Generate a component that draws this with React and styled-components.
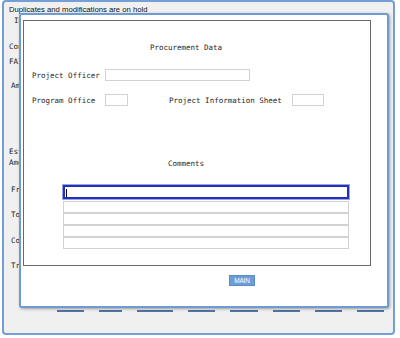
import React from "react";
import styled, { createGlobalStyle } from "styled-components";

const Global = createGlobalStyle`
  html, body { margin: 0; padding: 0; background: #ffffff; }
  * { box-sizing: border-box; }
`;

const Page = styled.div`
  width: 400px;
  height: 338px;
  padding: 0 5px 0 2px;
`;

const Window = styled.div`
  position: relative;
  width: 393px;
  height: 335px;
  border: 2px solid #739fd6;
  border-radius: 4px;
  background: #f0f0f0;
  display: flex;
  flex-direction: column;
  padding: 3px 0 21px 5px;
  overflow: hidden;
`;

const Notice = styled.div`
  font-family: "Liberation Sans", Arial, sans-serif;
  font-size: 7.7px;
  line-height: 10px;
  color: #111;
`;

const FieldLabel = styled.div`
  font-family: "DejaVu Sans Mono", monospace;
  font-size: 7.5px;
  line-height: 10px;
  color: #222;
  margin-top: ${(p) => p.$top}px;
  padding-left: ${(p) => p.$indent || 0}px;
  white-space: nowrap;
`;

const TabRow = styled.div`
  margin-top: auto;
  display: flex;
  gap: 15px;
  padding-left: 48px;
`;

const Tab = styled.div`
  width: ${(p) => p.$w}px;
  height: 2px;
  background: #4f75a6;
`;

const Modal = styled.div`
  position: absolute;
  left: 15px;
  top: 11px;
  width: 370px;
  height: 295px;
  background: #ffffff;
  border: 2px solid #6d9bd6;
  border-radius: 3px;
  box-shadow: 1px 1px 3px rgba(0, 0, 0, 0.35);
  padding: 5px 0 0 2px;
  display: flex;
  flex-direction: column;
`;

const Panel = styled.div`
  width: 348px;
  height: 246px;
  border: 1px solid #6a6a6a;
  display: flex;
  flex-direction: column;
  padding: 0 30px 0 8px;
  font-family: "DejaVu Sans Mono", monospace;
  font-size: 7.5px;
  color: #1e1e1e;
`;

const Heading = styled.div`
  text-align: center;
  line-height: 10px;
  margin-top: ${(p) => p.$top}px;
`;

const Row = styled.div`
  display: flex;
  align-items: center;
  height: 12px;
  margin-top: ${(p) => p.$top}px;
`;

const Label = styled.span`
  width: ${(p) => (p.$w ? `${p.$w}px` : "auto")};
  flex: none;
  white-space: nowrap;
  margin-left: ${(p) => p.$ml || 0}px;
`;

const TextBox = styled.div`
  width: ${(p) => p.$w}px;
  height: 12px;
  border: 1px solid #d2d2d2;
  background: #fff;
  flex: none;
  margin-left: ${(p) => p.$ml || 0}px;
`;

const CommentList = styled.div`
  display: flex;
  flex-direction: column;
  margin-top: 16px;
  padding-left: 31px;
`;

const CommentBox = styled.div`
  width: 286px;
  flex: none;
  height: ${(p) => (p.$focused ? 14 : 12)}px;
  border: ${(p) => (p.$focused ? "2px solid #2430b8" : "1px solid #d2d2d2")};
  outline: ${(p) => (p.$focused ? "1px solid #9aa6e4" : "none")};
  margin-top: ${(p) => (p.$first ? 2 : 0)}px;
  position: relative;
`;

const Caret = styled.span`
  position: absolute;
  left: 1px;
  top: 2px;
  width: 1px;
  height: 8px;
  background: #000;
`;

const Footer = styled.div`
  display: flex;
  padding-left: 206px;
  margin-top: 9px;
`;

const MainButton = styled.button`
  width: 26px;
  height: 11px;
  padding: 0;
  border: 1px solid #5a8ccc;
  background: #6e9dd6;
  color: #ffffff;
  font-family: "Liberation Sans", Arial, sans-serif;
  font-size: 6.5px;
  line-height: 9px;
  letter-spacing: -0.2px;
`;

const labels = [
  { t: "ID Number", top: 1, indent: 5 },
  { t: "Contract No", top: 16 },
  { t: "FAIN Number", top: 5 },
  { t: "Amendment", top: 14, indent: 2 },
  { t: "Estimated", top: 56 },
  { t: "Amount", top: 1 },
  { t: "From Date", top: 17, indent: 2 },
  { t: "To Date", top: 15, indent: 2 },
  { t: "Contact", top: 16, indent: 2 },
  { t: "Transfer", top: 15, indent: 2 },
];

const tabs = [27, 23, 36, 27, 28, 27, 27, 27];

export default function App() {
  return (
    <>
      <Global />
      <Page>
        <Window>
          <Notice>Duplicates and modifications are on hold</Notice>
          {labels.map((l, i) => (
            <FieldLabel key={i} $top={l.top} $indent={l.indent}>
              {l.t}
            </FieldLabel>
          ))}
          <TabRow>
            {tabs.map((w, i) => (
              <Tab key={i} $w={w} />
            ))}
          </TabRow>
          <Modal>
            <Panel>
              <Heading $top={22}>Procurement Data</Heading>
              <Row $top={16}>
                <Label $w={73}>Project Officer</Label>
                <TextBox $w={145} />
              </Row>
              <Row $top={13}>
                <Label $w={73}>Program Office</Label>
                <TextBox $w={23} />
                <Label $ml={41}>Project Information Sheet</Label>
                <TextBox $w={32} $ml={10} />
              </Row>
              <Heading $top={53}>Comments</Heading>
              <CommentList>
                <CommentBox $focused>
                  <Caret />
                </CommentBox>
                <CommentBox $first />
                <CommentBox />
                <CommentBox />
                <CommentBox />
              </CommentList>
            </Panel>
            <Footer>
              <MainButton>MAIN</MainButton>
            </Footer>
          </Modal>
        </Window>
      </Page>
    </>
  );
}
